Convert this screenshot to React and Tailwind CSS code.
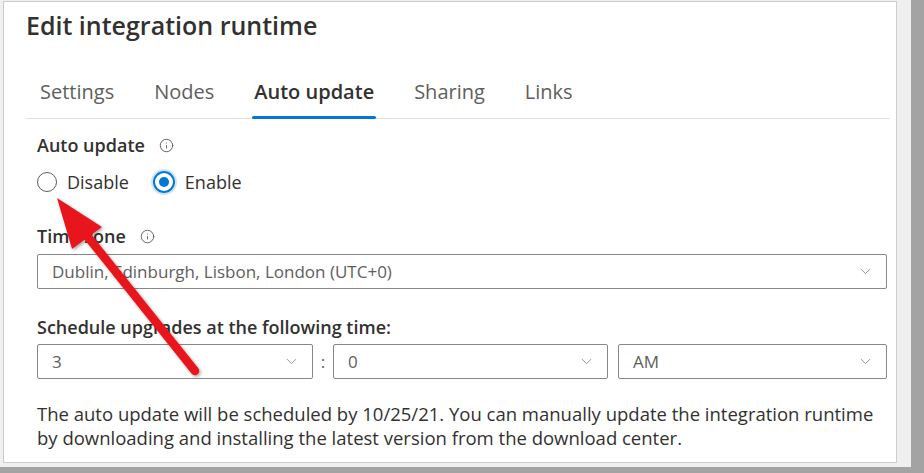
import { ChevronDown, Info } from "lucide-react";

const font = { fontFamily: '"Open Sans", "Noto Sans", sans-serif' };

const tabs = ["Settings", "Nodes", "Auto update", "Sharing", "Links"];

const Select = ({ value, className = "" }) => (
  <div
    className={`flex items-center justify-between h-[35px] border border-[#8a8886] rounded-[2px] pl-[14px] pr-[12px] text-[17px] text-[#605e5c] ${className}`}
  >
    <span>{value}</span>
    <ChevronDown className="w-[17px] h-[17px] text-[#8a8886]" strokeWidth={1.25} />
  </div>
);

const Label = ({ children, info }) => (
  <div className="flex items-center gap-[14px] text-[18px] font-semibold text-[#323130] h-[24px]">
    <span>{children}</span>
    {info && <Info className="w-[15px] h-[15px] text-[#605e5c]" strokeWidth={1.5} />}
  </div>
);

export default function App() {
  return (
    <div className="relative w-[924px] h-[473px] bg-[#a3a3a3] overflow-hidden" style={font}>
      <div className="w-[911px] h-[467px] bg-[#efefef] pl-[3px] pt-[1px]">
        <div className="w-[894px] h-[462px] bg-white border border-[#cdcdcd] pl-[22px] pr-[6px]">
          {/* Title */}
          <h1 className="text-[25px] font-semibold text-[#323130] mt-[6px] leading-[34px]">
            Edit integration runtime
          </h1>

          {/* Tabs */}
          <div className="flex gap-[36px] pl-[12px] mt-[36px] border-b border-[#e1dfdd]">
            {tabs.map((t) => (
              <div
                key={t}
                className={`relative px-[2px] pb-[12px] text-[20px] leading-[28px] ${
                  t === "Auto update" ? "font-semibold text-[#323130]" : "text-[#605e5c]"
                }`}
              >
                {t}
                {t === "Auto update" && (
                  <div className="absolute left-0 right-0 bottom-[-1px] h-[3px] bg-[#0078d4] rounded-full" />
                )}
              </div>
            ))}
          </div>

          {/* Form */}
          <div className="pl-[11px] pr-[3px]">
            <div className="mt-[14px]">
              <Label info>Auto update</Label>
            </div>
            <div className="flex items-center mt-[13px] h-[24px] text-[18px] text-[#323130]">
              <div className="w-[20px] h-[20px] rounded-full border border-[#605e5c] bg-white" />
              <span className="ml-[10px]">Disable</span>
              <div className="ml-[24px] w-[22px] h-[22px] rounded-full border-[2px] border-[#0078d4] ring-2 ring-[#cfe4f7] flex items-center justify-center">
                <div className="w-[10px] h-[10px] rounded-full bg-[#0078d4]" />
              </div>
              <span className="ml-[10px]">Enable</span>
            </div>

            <div className="mt-[30px]">
              <Label info>Time zone</Label>
            </div>
            <Select value="Dublin, Edinburgh, Lisbon, London (UTC+0)" className="mt-[6px]" />

            <div className="mt-[26px]">
              <Label>Schedule upgrades at the following time:</Label>
            </div>
            <div className="flex items-center mt-[5px]">
              <Select value="3" className="w-[276px]" />
              <span className="w-[20px] text-center text-[17px] text-[#605e5c]">:</span>
              <Select value="0" className="w-[275px]" />
              <Select value="AM" className="ml-[10px] flex-1" />
            </div>

            <p className="mt-[23px] text-[18.5px] leading-[24px] text-[#323130] whitespace-nowrap">
              The auto update will be scheduled by 10/25/21. You can manually update the integration runtime
              <br />
              by downloading and installing the latest version from the download center.
            </p>
          </div>
        </div>
      </div>

      {/* Red arrow annotation */}
      <svg className="absolute left-0 top-0" width="924" height="473" viewBox="0 0 924 473">
        <defs>
          <filter id="sh" x="-20%" y="-20%" width="140%" height="140%">
            <feDropShadow dx="1.5" dy="1.5" stdDeviation="1.5" floodColor="#000" floodOpacity="0.35" />
          </filter>
        </defs>
        <g filter="url(#sh)">
          <line x1="84" y1="232" x2="195" y2="371" stroke="#e8151b" strokeWidth="8.5" strokeLinecap="round" />
          <polygon points="57,198 102,227 72,249" fill="#e8151b" />
        </g>
      </svg>
    </div>
  );
}
